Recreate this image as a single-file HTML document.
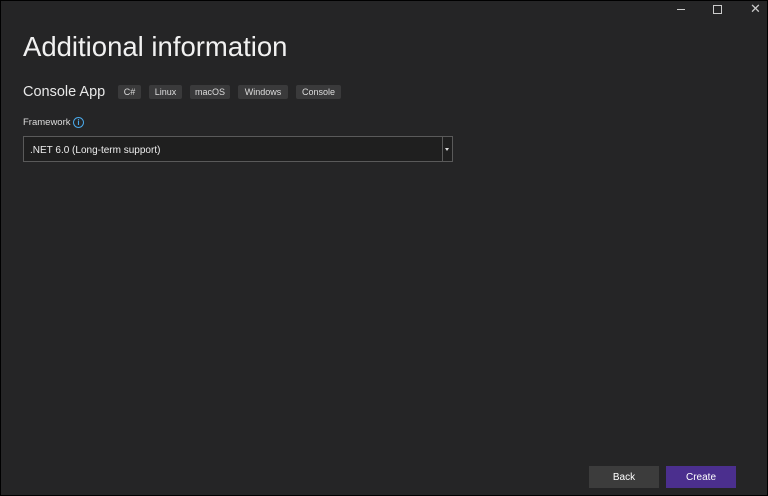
<!DOCTYPE html>
<html><head><style>
body{margin:0;width:768px;height:496px;overflow:hidden;background:#000;font-family:"Liberation Sans",sans-serif;}
.win{position:absolute;left:1px;top:1px;width:766px;height:494px;background:#252526;}
.t{position:absolute;color:#f1f1f1;white-space:nowrap;}
.tag{position:absolute;top:85px;height:14px;background:#3a3a3b;border-radius:2px;color:#ddd;font-size:9px;line-height:14px;text-align:center;}
.btn{position:absolute;top:466px;height:22px;color:#fff;font-size:10px;line-height:23px;text-align:center;}
</style></head><body><div class="win"></div>
<div class="t" style="left:23px;top:31px;font-size:27.5px;">Additional information</div>
<div class="t" style="left:23px;top:84px;font-size:14.5px;color:#e8e8e8">Console App</div>
<div class="tag" style="left:118px;width:23px">C#</div>
<div class="tag" style="left:149px;width:33px">Linux</div>
<div class="tag" style="left:190px;width:40px">macOS</div>
<div class="tag" style="left:238px;width:50px">Windows</div>
<div class="tag" style="left:296px;width:45px">Console</div>
<div class="t" style="left:23px;top:117px;font-size:9.5px;color:#ddd">Framework</div>
<div style="position:absolute;left:73px;top:117px;width:9px;height:9px;border:1px solid #4aa8e8;border-radius:50%;color:#4aa8e8;font-size:8px;line-height:9px;text-align:center;font-weight:bold">i</div>
<div style="position:absolute;left:23px;top:136px;width:428px;height:24px;border:1px solid #5a5a5a;background:#1f1f1f;"></div>
<div style="position:absolute;left:442px;top:137px;width:1px;height:24px;background:#5a5a5a"></div>
<div style="position:absolute;left:445px;top:148px;border-left:2.5px solid transparent;border-right:2.5px solid transparent;border-top:3px solid #ddd"></div>
<div class="t" style="left:30px;top:145px;font-size:10px;color:#eee">.NET 6.0 (Long-term support)</div>
<div style="position:absolute;left:677px;top:9px;width:8px;height:1px;background:#ccc"></div>
<div style="position:absolute;left:713px;top:5px;width:7px;height:7px;border:1px solid #ccc"></div>
<div class="t" style="left:750px;top:1px;font-size:13px;color:#ccc">✕</div>
<div class="btn" style="left:589px;width:70px;background:#3c3c3c">Back</div>
<div class="btn" style="left:666px;width:70px;background:#4b2f8e">Create</div>
</body></html>
